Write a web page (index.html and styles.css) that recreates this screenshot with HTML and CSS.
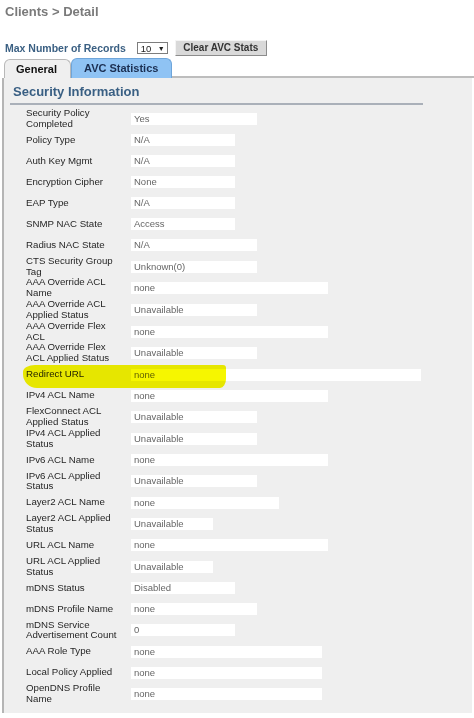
FILE: index.html
```html
<!DOCTYPE html>
<html lang="en">
<head>
    <meta charset="UTF-8">
    <meta name="viewport" content="width=device-width, initial-scale=1.0">
    <title>Clients &gt; Detail</title>
    <link rel="stylesheet" href="styles.css">
</head>
<body>
    <h1 class="crumb">Clients &gt; Detail</h1>

    <div class="toolbar">
        <span class="toolbar-label">Max Number of Records</span>
        <span class="records"><span>10</span><span class="arrow">&#9660;</span></span>
        <span class="btn">Clear AVC Stats</span>
    </div>

    <!-- Tabs -->
    <div class="tabs">
        <div class="tab tab-general">General</div>
        <div class="tab tab-avc">AVC Statistics</div>
        <div class="tab-fill"></div>
    </div>

    <div class="panel">
        <h2 class="section-title">Security Information</h2>

        <div class="fields">
            <div class="field"><div class="field-label">Security Policy<br>Completed</div><div class="field-value medium">Yes</div></div>
            <div class="field"><div class="field-label">Policy Type</div><div class="field-value small">N/A</div></div>
            <div class="field"><div class="field-label">Auth Key Mgmt</div><div class="field-value small">N/A</div></div>
            <div class="field"><div class="field-label">Encryption Cipher</div><div class="field-value small">None</div></div>
            <div class="field"><div class="field-label">EAP Type</div><div class="field-value small">N/A</div></div>
            <div class="field"><div class="field-label">SNMP NAC State</div><div class="field-value small">Access</div></div>
            <div class="field"><div class="field-label">Radius NAC State</div><div class="field-value medium">N/A</div></div>
            <div class="field"><div class="field-label">CTS Security Group<br>Tag</div><div class="field-value medium">Unknown(0)</div></div>
            <div class="field"><div class="field-label">AAA Override ACL<br>Name</div><div class="field-value large">none</div></div>
            <div class="field"><div class="field-label">AAA Override ACL<br>Applied Status</div><div class="field-value medium">Unavailable</div></div>
            <div class="field"><div class="field-label">AAA Override Flex<br>ACL</div><div class="field-value large">none</div></div>
            <div class="field"><div class="field-label">AAA Override Flex<br>ACL Applied Status</div><div class="field-value medium">Unavailable</div></div>
            <div class="field">
                <div class="field-label">Redirect URL</div><div class="field-value full">none</div>
                <span class="marker"></span>
            </div>
            <div class="field"><div class="field-label">IPv4 ACL Name</div><div class="field-value large">none</div></div>
            <div class="field"><div class="field-label">FlexConnect ACL<br>Applied Status</div><div class="field-value medium">Unavailable</div></div>
            <div class="field"><div class="field-label">IPv4 ACL Applied<br>Status</div><div class="field-value medium">Unavailable</div></div>
            <div class="field"><div class="field-label">IPv6 ACL Name</div><div class="field-value large">none</div></div>
            <div class="field"><div class="field-label">IPv6 ACL Applied<br>Status</div><div class="field-value medium">Unavailable</div></div>
            <div class="field"><div class="field-label">Layer2 ACL Name</div><div class="field-value long">none</div></div>
            <div class="field"><div class="field-label">Layer2 ACL Applied<br>Status</div><div class="field-value short">Unavailable</div></div>
            <div class="field"><div class="field-label">URL ACL Name</div><div class="field-value large">none</div></div>
            <div class="field"><div class="field-label">URL ACL Applied<br>Status</div><div class="field-value short">Unavailable</div></div>
            <div class="field"><div class="field-label">mDNS Status</div><div class="field-value small">Disabled</div></div>
            <div class="field"><div class="field-label">mDNS Profile Name</div><div class="field-value medium">none</div></div>
            <div class="field"><div class="field-label">mDNS Service<br>Advertisement Count</div><div class="field-value small">0</div></div>
            <div class="field"><div class="field-label">AAA Role Type</div><div class="field-value role">none</div></div>
            <div class="field"><div class="field-label">Local Policy Applied</div><div class="field-value role">none</div></div>
            <div class="field"><div class="field-label">OpenDNS Profile<br>Name</div><div class="field-value role">none</div></div>
        </div>
    </div>
</body>
</html>
```

FILE: styles.css
```css
/* Page */
body {
    margin: 0;
    font-family: "Liberation Sans", Arial, sans-serif;
    background-color: #fff;
    color: #333;
}

.crumb {
    margin: 0;
    padding: 4px 0 0 5px;
    font-size: 13px;
    line-height: 16px;
    font-weight: bold;
    color: #7a7a7a;
}

/* Toolbar */
.toolbar {
    display: flex;
    align-items: center;
    height: 16px;
    margin-top: 20px;
    padding-left: 5px;
}

.toolbar-label {
    font-size: 10.5px;
    font-weight: bold;
    color: #3b6083;
}

.records {
    display: flex;
    justify-content: space-between;
    align-items: center;
    margin-left: 11px;
    width: 31px;
    height: 12px;
    box-sizing: border-box;
    padding: 0 2px 0 3px;
    border: 1px solid #7d7d7d;
    background: #fff;
    font-size: 9.5px;
    color: #222;
}

.records .arrow {
    font-size: 7px;
}

.btn {
    margin-left: 7px;
    width: 92px;
    height: 16px;
    box-sizing: border-box;
    border: 1px solid;
    border-color: #f4f4f4 #8c8c8c #8c8c8c #f4f4f4;
    background: #d9d9d9;
    font-size: 10px;
    line-height: 14px;
    font-weight: bold;
    text-align: center;
    color: #333;
}

/* Tabs */
.tabs {
    display: flex;
    align-items: flex-end;
    height: 20px;
    margin-top: 2px;
    padding-left: 4px;
}

.tab {
    box-sizing: border-box;
    border: 1px solid #b8b8b8;
    border-bottom: none;
    border-radius: 6px 6px 0 0;
    font-size: 11px;
    font-weight: bold;
}

.tab-general {
    width: 67px;
    height: 19px;
    line-height: 18px;
    padding-left: 11px;
    background: #efefef;
    color: #111;
}

.tab-avc {
    width: 101px;
    height: 20px;
    line-height: 19px;
    padding-left: 12px;
    background: #8fc3f4;
    border-color: #6ea5da;
    color: #1b2f52;
}

.tab-fill {
    flex: 1;
    border-bottom: 2px solid #bdbdbd;
}

/* Panel */
.panel {
    margin-left: 2px;
    width: 470px;
    box-sizing: border-box;
    padding: 6px 0 8px;
    border-left: 2px solid #b5b5b5;
    background: #efefef;
}

.section-title {
    margin: 0 0 0 6px;
    width: 413px;
    padding: 0 0 3px 3px;
    box-sizing: border-box;
    border-bottom: 2px solid #aab0b9;
    font-size: 13px;
    line-height: 16px;
    color: #395f83;
}

.fields {
    margin-top: 3px;
}

.field {
    position: relative;
    display: flex;
    align-items: center;
    min-height: 21px;
    padding-left: 22px;
}

.field-label {
    width: 105px;
    flex-shrink: 0;
    font-size: 9.7px;
    line-height: 10.85px;
    color: #262626;
}

.field-value {
    height: 12px;
    line-height: 12px;
    box-sizing: border-box;
    padding-left: 3px;
    background: #fff;
    font-size: 9.5px;
    color: #666;
}

.short { width: 82px; }
.small { width: 104px; }
.medium { width: 126px; }
.long { width: 148px; }
.role { width: 191px; }
.large { width: 197px; }
.full { width: 290px; }

/* Yellow highlighter stroke over Redirect URL */
.marker {
    position: absolute;
    left: 19px;
    top: 1px;
    width: 203px;
    height: 23px;
    background: #f6f600;
    mix-blend-mode: multiply;
    border-radius: 12px 3px 6px 14px / 7px 3px 9px 14px;
    pointer-events: none;
}
```
